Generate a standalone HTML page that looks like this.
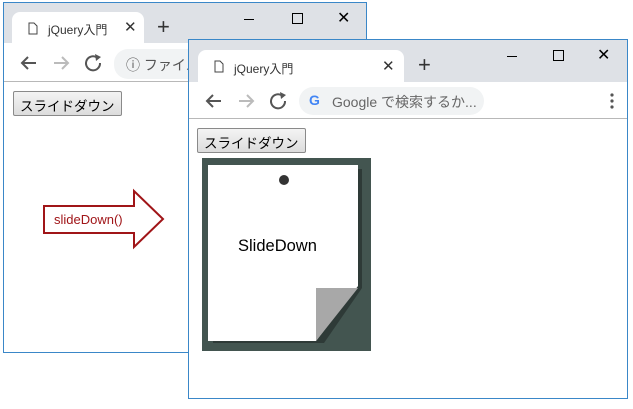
<!DOCTYPE html>
<html><head><meta charset="utf-8"><style>
body{margin:0;width:633px;height:409px;background:#fff;position:relative;overflow:hidden;font-family:"Liberation Sans","Noto Sans CJK JP",sans-serif}
.w{position:absolute;border:1px solid #3a87c8;background:#fff;overflow:hidden}
.tb{position:absolute;left:0;right:0;top:0;background:#dee1e6}
.tab{position:absolute;background:#fff;border-radius:8px 8px 0 0;font-size:12px;color:#333}
.ab{position:absolute;left:0;right:0;background:#fff;border-bottom:1px solid #b8b8b8}
.btn{position:absolute;border:1px solid #8a8a8a;border-radius:2px;background:linear-gradient(#f4f4f4,#dcdcdc);font-size:13.5px;color:#000;box-sizing:border-box;padding:3px 0 0 6px}
.omni{position:absolute;background:#f1f3f4;border-radius:14px;font-size:14px;color:#666}
.ic{position:absolute}
</style></head><body>
<svg width="0" height="0" style="position:absolute"><defs>
<g id="nav"><path d="M20 10H6M12 4L6 10L12 16" fill="none" stroke="#555" stroke-width="2"/><path d="M52 10H38M46 4L52 10L46 16" fill="none" stroke="#bbb" stroke-width="2"/><path d="M80 4A7 7 0 1 0 84 10" fill="none" stroke="#555" stroke-width="2"/><path d="M79 1L85 4L80 8Z" fill="#555"/></g>
</defs></svg>
<div class="w" style="left:3px;top:2px;width:362px;height:349px">
 <div class="tb" style="height:40px"></div>
 <div class="tab" style="left:8px;top:9px;width:132px;height:31px">
  <svg style="position:absolute;left:16px;top:10px" width="10" height="13"><path d="M1 1h5l3 3v8H1z" fill="none" stroke="#444"/></svg>
  <span style="position:absolute;left:36px;top:9px">jQuery入門</span>
  <span style="position:absolute;left:112px;top:6px;font-size:15px">✕</span></div>
 <span class="ic" style="left:153px;top:11px;font-size:22px;color:#333">+</span>
 <div style="position:absolute;left:240px;top:16px;width:10px;height:1px;background:#000"></div>
 <div style="position:absolute;left:288px;top:10px;width:9px;height:9px;border:1px solid #000"></div>
 <span style="position:absolute;left:333px;top:5px;font-size:16px">✕</span>
 <div class="ab" style="top:40px;height:38px"></div>
 <svg class="ic" style="left:12px;top:50px" width="90" height="20"><use href="#nav"/></svg>
 <div class="omni" style="left:110px;top:46px;width:260px;height:30px"><span style="position:absolute;left:12px;top:6px;color:#555">ⓘ ファイル</span></div>
 <div class="btn" style="left:9px;top:88px;width:109px;height:25px">スライドダウン</div>
 <svg style="position:absolute;left:0;top:0" width="362" height="349"><path d="M40 203H130V188L159 216L130 244V230H40Z" fill="#fff" stroke="#a01518" stroke-width="2"/>
 <text x="50" y="221" font-size="13" fill="#a01518" font-family="Liberation Sans">slideDown()</text></svg>
</div>
<div class="w" style="left:188px;top:39px;width:438px;height:358px">
 <div class="tb" style="height:42px"></div>
 <div class="tab" style="left:9px;top:10px;width:206px;height:32px">
  <svg style="position:absolute;left:16px;top:10px" width="10" height="13"><path d="M1 1h5l3 3v8H1z" fill="none" stroke="#444"/></svg>
  <span style="position:absolute;left:36px;top:10px">jQuery入門</span>
  <span style="position:absolute;left:184px;top:7px;font-size:15px">✕</span></div>
 <span class="ic" style="left:229px;top:12px;font-size:22px;color:#333">+</span>
 <div style="position:absolute;left:318px;top:16px;width:10px;height:1px;background:#000"></div>
 <div style="position:absolute;left:364px;top:10px;width:9px;height:9px;border:1px solid #000"></div>
 <span style="position:absolute;left:408px;top:5px;font-size:16px">✕</span>
 <div class="ab" style="top:42px;height:36px"></div>
 <svg class="ic" style="left:12px;top:51px" width="90" height="20"><use href="#nav"/></svg>
 <div class="omni" style="left:110px;top:47px;width:185px;height:28px"><span style="position:absolute;left:10px;top:5px;font-weight:bold;color:#4285f4">G</span><span style="position:absolute;left:33px;top:5px">Google で検索するか...</span></div>
 <svg class="ic" style="left:421px;top:53px" width="4" height="16"><circle cx="2" cy="2" r="1.6" fill="#555"/><circle cx="2" cy="8" r="1.6" fill="#555"/><circle cx="2" cy="14" r="1.6" fill="#555"/></svg>
 <div class="btn" style="left:8px;top:88px;width:109px;height:25px">スライドダウン</div>
 <svg style="position:absolute;left:13px;top:118px" width="169" height="193">
  <rect width="169" height="193" fill="#435550"/>
  <path d="M11 11H160V130L122 185H11Z" fill="#2e3a37"/>
  <path d="M6 7H156V128L114 183H6Z" fill="#fff"/>
  <path d="M114 130H156L114 183Z" fill="#a8a8a8"/>
  <circle cx="82" cy="22" r="5" fill="#333"/>
  <text x="36" y="93" font-size="16.5" fill="#000" font-family="Liberation Sans">SlideDown</text>
 </svg>
</div>
</body></html>
